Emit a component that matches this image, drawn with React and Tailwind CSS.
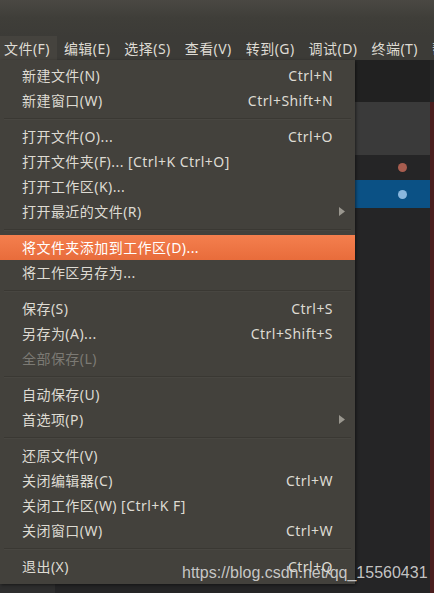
import React from 'react';

const FONT = { fontFamily: '"Noto Sans", "Noto Sans CJK SC", sans-serif' };

const MENUBAR = ['文件(F)', '编辑(E)', '选择(S)', '查看(V)', '转到(G)', '调试(D)', '终端(T)', '帮助(H)'];

// groups of menu items; sep between groups
const GROUPS = [
  [
    { label: '新建文件(N)', key: 'Ctrl+N' },
    { label: '新建窗口(W)', key: 'Ctrl+Shift+N' },
  ],
  [
    { label: '打开文件(O)...', key: 'Ctrl+O' },
    { label: '打开文件夹(F)... [Ctrl+K Ctrl+O]' },
    { label: '打开工作区(K)...' },
    { label: '打开最近的文件(R)', sub: true },
  ],
  [
    { label: '将文件夹添加到工作区(D)...', active: true },
    { label: '将工作区另存为...' },
  ],
  [
    { label: '保存(S)', key: 'Ctrl+S' },
    { label: '另存为(A)...', key: 'Ctrl+Shift+S' },
    { label: '全部保存(L)', disabled: true },
  ],
  [
    { label: '自动保存(U)' },
    { label: '首选项(P)', sub: true },
  ],
  [
    { label: '还原文件(V)' },
    { label: '关闭编辑器(C)', key: 'Ctrl+W' },
    { label: '关闭工作区(W) [Ctrl+K F]' },
    { label: '关闭窗口(W)', key: 'Ctrl+W' },
  ],
  [
    { label: '退出(X)', key: 'Ctrl+Q' },
  ],
];

function MenuRow({ item }) {
  return (
    <div
      className={`flex items-center h-[25px] pl-[22px] pr-[22px] text-[14px] tracking-[0.45px] ${
        item.active
          ? 'bg-gradient-to-b from-[#f47f4e] to-[#e86c3b] text-[#ffffff]'
          : item.disabled
          ? 'text-[#7c7a74]'
          : 'text-[#dedbd3]'
      }`}
    >
      <span className="flex-1 whitespace-nowrap">{item.label}</span>
      {item.key && <span className="whitespace-nowrap">{item.key}</span>}
      {item.sub && (
        <svg width="6" height="9" viewBox="0 0 6 9" className="-mr-[12px]">
          <path d="M0 0 L6 4.5 L0 9 Z" fill="#9a978f" />
        </svg>
      )}
    </div>
  );
}

export default function App() {
  return (
    <div className="relative w-[434px] h-[593px] overflow-hidden bg-[#252526] flex flex-col" style={FONT}>
      {/* title bar */}
      <div className="h-[36px] bg-gradient-to-b from-[#4a4843] via-[#3f3e39] to-[#3c3b37]" />

      {/* menubar */}
      <div className="h-[24px] bg-[#3c3b37] flex items-center text-[14px] tracking-[0.45px] text-[#dfdcd4] whitespace-nowrap">
        {MENUBAR.map((m, i) => (
          <div
            key={m}
            className={`h-full flex items-center ${i === 0 ? 'bg-[#45433e] pl-[4px] pr-[7px]' : 'px-[7px]'}`}
          >
            {m}
          </div>
        ))}
      </div>

      {/* editor body behind the menu */}
      <div className="flex-1 flex">
        <div className="w-[55px] bg-[#2e2e2e]" />
        <div className="flex-1 flex flex-col bg-[#252526]">
          <div className="h-[42px] bg-[#212121]" />
          <div className="h-[53px] bg-[#3a3a3a]" />
          <div className="h-[25px] flex items-center justify-end pr-[23px]">
            <span className="w-[9px] h-[9px] rounded-full bg-[#a85d4f]" />
          </div>
          <div className="h-[28px] bg-[#0b5185] flex items-center justify-end pr-[23px]">
            <span className="w-[9px] h-[9px] rounded-full bg-[#8ab7de]" />
          </div>
          <div className="flex-1" />
        </div>
        <div className="w-[4px] flex flex-col">
          <div className="h-[42px] bg-[#252526]" />
          <div className="flex-1 bg-[#4a1d1d]" />
        </div>
      </div>

      {/* dropdown */}
      <div className="absolute left-0 top-[60px] w-[355px] bg-[#43413c] pt-[3px] pb-[5px] shadow-[1px_1px_3px_rgba(0,0,0,0.5)]">
        {GROUPS.map((g, gi) => (
          <div key={gi}>
            {gi > 0 && (
              <div className="h-[11px] flex flex-col justify-center px-[4px]">
                <div className="h-px bg-[#3a3833]" />
                <div className="h-px bg-[#484641]" />
              </div>
            )}
            {g.map((item) => (
              <MenuRow key={item.label} item={item} />
            ))}
          </div>
        ))}
      </div>

      {/* watermark */}
      <div
        className="absolute left-[182px] top-[561px] text-[16px] text-[#d8d8d8]/90 whitespace-nowrap"
        style={{ fontFamily: '"Liberation Sans", Arial, sans-serif' }}
      >
        https://blog.csdn.net/qq_15560431
      </div>
    </div>
  );
}
